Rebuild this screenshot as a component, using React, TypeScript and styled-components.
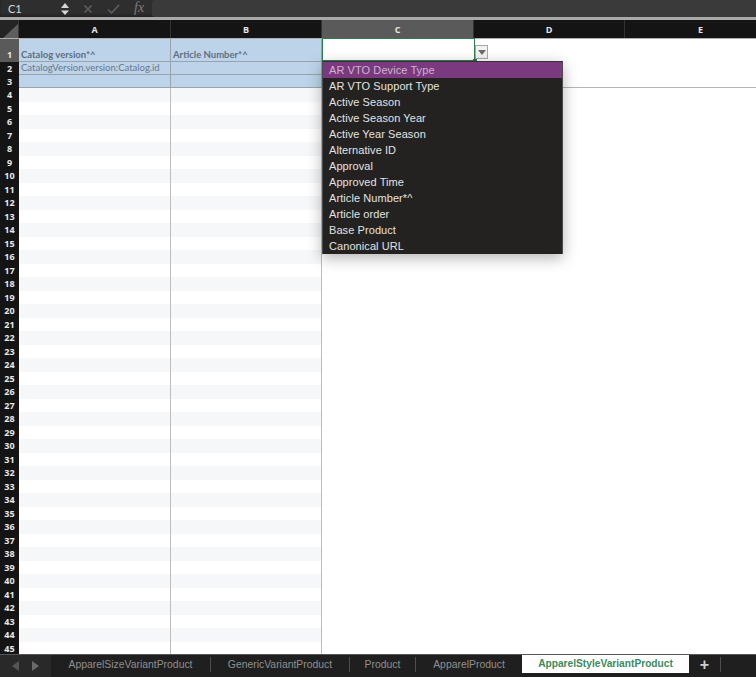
import React from "react";
import styled, { createGlobalStyle } from "styled-components";

const Global = createGlobalStyle`
  html, body { margin: 0; padding: 0; background: #fff; }
  body { font-family: "Liberation Sans", Arial, sans-serif; overflow: hidden; }
  #root { width: 756px; height: 677px; }
`;
const Page = styled.div`
  position: relative; width: 756px; height: 677px; display: flex; flex-direction: column; overflow: hidden;
`;
const FormulaBar = styled.div`
  height: 17px; flex: none; display: flex; align-items: center; background: #2e2e2e; color: #ddd;
  border-bottom: 3px solid #a9a9a9; box-shadow: inset 0 -2px 2px #222;
`;
const NameBox = styled.div`
  width: 60px; padding-left: 8px; box-sizing: border-box; font: 11px "Lato", sans-serif; color: #d8d8d8;
`;
const Stepper = styled.svg`width: 10px; height: 14px; flex: none;`;
const FormulaIcons = styled.div`
  width: 82px; flex: none; display: flex; align-items: center; padding-left: 13px; gap: 14px; box-sizing: border-box; height: 100%;
`;
const FxLabel = styled.span`
  font: italic 14px "Liberation Serif", serif; color: #7c7c7c; margin-top: -2px;
`;
const FormulaInput = styled.div`
  flex: 1; height: 100%; background: #3a3a3a; border-radius: 3px 0 0 3px;
`;
const ColumnHeader = styled.div`
  height: 18px; flex: none; display: grid; grid-template-columns: 19px 152px 151px 152px 151px 152px; background: #141414;
  border-bottom: 1px solid #b0b0b0;
`;
const Corner = styled.div`
  background: #242424; border-right: 1px solid #3a3a3a; display: flex; align-items: flex-end; justify-content: flex-end;
`;
const ColLabel = styled.div<{ $on?: boolean }>`
  display: flex; align-items: center; justify-content: center; font: 700 9px "Open Sans", sans-serif; color: #e4e4e4;
  background: ${(p) => (p.$on ? "#5a5a5a" : "transparent")}; border-right: 1px solid #333;
`;
const Sheet = styled.div`flex: 1; display: flex; flex-direction: column; min-height: 0;`;
const Row = styled.div<{ $h: number; $line?: boolean }>`
  height: ${(p) => p.$h}px; flex: none; box-sizing: border-box; display: grid;
  grid-template-columns: 19px 152px 151px 1fr;
  ${(p) => (p.$line ? "border-bottom: 1px solid #b5b5b5;" : "")}
`;
const RowLabel = styled.div<{ $on?: boolean }>`
  background: ${(p) => (p.$on ? "#5a5a5a" : "#141414")}; color: #e8e8e8; font: 700 9px "Open Sans", sans-serif;
  display: flex; align-items: ${(p) => (p.$on ? "flex-end" : "center")}; justify-content: center; line-height: 13px; box-sizing: border-box;
  padding-bottom: ${(p) => (p.$on ? 1 : 0)}px;
`;
const Cell = styled.div<{ $tone: "blue" | "stripe" | "plain"; $head?: boolean }>`
  box-sizing: border-box; border-right: 1px solid #bdbdbd; overflow: hidden; white-space: nowrap; padding-left: 2px;
  display: flex; align-items: flex-end;
  background: ${(p) => (p.$tone === "blue" ? "#bdd3e9" : p.$tone === "stripe" ? "#f5f7f9" : "#fff")};
  ${(p) => (p.$tone === "blue" ? "border-bottom: 1px solid #98a3ae; border-right-color: #98a3ae;" : "")}
  font: ${(p) => (p.$head ? 700 : 400)} 9.5px "Lato", sans-serif;
  color: ${(p) => (p.$head ? "#5d7083" : "#66798c")}; line-height: 12px;
`;
const Blank = styled.div``;
const SelectedCell = styled.div`
  position: absolute; left: 322px; top: 38px; width: 153px; height: 23px; box-sizing: border-box;
  border: 1px solid #2f7d4f; background: #fff;
`;
const Handle = styled.div`
  position: absolute; left: 473px; top: 59px; width: 4px; height: 4px; background: #217346;
`;
const ArrowButton = styled.div`
  position: absolute; left: 475px; top: 45px; width: 13px; height: 14px; box-sizing: border-box;
  background: #f2f2f2; border: 1px solid #a8a8a8; display: flex; align-items: center; justify-content: center;
  &::after { content: ""; border-left: 4px solid transparent; border-right: 4px solid transparent; border-top: 5px solid #6a6a6a; }
`;
const Menu = styled.div`
  position: absolute; left: 322px; top: 61px; width: 241px; height: 193px; box-sizing: border-box;
  background: #232221; box-shadow: 0 4px 14px rgba(0,0,0,.3); border: 1px solid #4c4c4c; border-bottom: 0; border-top-color: #333;
`;
const MenuItem = styled.div<{ $on?: boolean }>`
  height: 16px; padding-left: 6px; font: 11px/16px "Liberation Sans", sans-serif; letter-spacing: .08px;
  background: ${(p) => (p.$on ? "#7b3a80" : "transparent")}; color: ${(p) => (p.$on ? "#cdb4cf" : "#e2e2e2")};
`;
const TabBar = styled.div`
  height: 23px; flex: none; display: flex; background: #1f1f1f; border-top: 1px solid #565656; box-sizing: border-box;
`;
const TabNav = styled.div`
  width: 51px; flex: none; display: flex; gap: 13px; align-items: center; padding-left: 12px; box-sizing: border-box; background: #292929;
  height: 22px;
`;
const Tab = styled.div<{ $w: number; $active?: boolean; $plain?: boolean }>`
  width: ${(p) => p.$w}px; flex: none; box-sizing: border-box; height: ${(p) => (p.$active ? 18 : 15)}px;
  margin-top: ${(p) => (p.$active ? 0 : 2)}px; padding-bottom: ${(p) => (p.$active ? 2 : 0)}px;
  display: flex; align-items: center; justify-content: center;
  font: ${(p) => (p.$active ? "700 10.2px" : "400 10.4px")} "Liberation Sans", sans-serif;
  color: ${(p) => (p.$active ? "#3c8a5c" : "#8f8f8f")};
  background: ${(p) => (p.$active ? "#fff" : "transparent")};
  border-right: ${(p) => (p.$active || p.$plain ? "none" : "1px solid #4e4e4e")};
`;
const PlusTab = styled(Tab)`
  font-size: 16px; font-weight: 700; color: #cfcfcf;
`;

const items = ["AR VTO Device Type","AR VTO Support Type","Active Season","Active Season Year","Active Year Season","Alternative ID","Approval","Approved Time","Article Number*^","Article order","Base Product","Canonical URL"];
const columns = ["A","B","C","D","E"];
const rows = Array.from({ length: 45 }, (_, i) => i + 1);
const heightOf = (n: number) => (n === 1 ? 23 : n === 2 || n === 3 ? 13 : 13.5);

export default function App() {
  return (
    <Page>
      <Global />
      <FormulaBar>
        <NameBox>C1</NameBox>
        <Stepper viewBox="0 0 10 14"><path d="M5 1 9 6H1zM1 8.500h8L5 13z" fill="#d6d6d6" /></Stepper>
        <FormulaIcons>
          <svg width="10" height="10" viewBox="0 0 10 10"><path d="M1.500 1.500l7 7M8.500 1.500l-7 7" stroke="#5f5f5f" strokeWidth="1.500" /></svg>
          <svg width="13" height="10" viewBox="0 0 13 10"><path d="M1 5.500l3.500 3.500L12 1" stroke="#5f5f5f" strokeWidth="1.500" fill="none" /></svg>
          <FxLabel>fx</FxLabel>
        </FormulaIcons>
        <FormulaInput />
      </FormulaBar>
      <ColumnHeader>
        <Corner>
          <svg width="15" height="14" viewBox="0 0 15 14"><path d="M15 0v14H0z" fill="#5e5e5e" /></svg>
        </Corner>
        {columns.map((c) => (
          <ColLabel key={c} $on={c === "C"}>{c}</ColLabel>
        ))}
      </ColumnHeader>
      <Sheet>
        {rows.map((n) => {
          const blue = n <= 3;
          const tone = blue ? "blue" : n % 2 === 0 ? "stripe" : "plain";
          return (
            <Row key={n} $h={heightOf(n)} $line={n === 3}>
              <RowLabel $on={n === 1}>{n}</RowLabel>
              <Cell $tone={tone} $head={n === 1}>
                {n === 1 ? "Catalog version*^" : n === 2 ? "CatalogVersion.version:Catalog.id" : ""}
              </Cell>
              <Cell $tone={tone} $head={n === 1}>{n === 1 ? "Article Number*^" : ""}</Cell>
              <Blank />
            </Row>
          );
        })}
      </Sheet>
      <TabBar>
        <TabNav>
          <svg width="7" height="10" viewBox="0 0 7 10"><path d="M7 0v10L0 5z" fill="#555" /></svg>
          <svg width="7" height="10" viewBox="0 0 7 10"><path d="M0 0v10l7-5z" fill="#6a6a6a" /></svg>
        </TabNav>
        <Tab $w={160}>ApparelSizeVariantProduct</Tab>
        <Tab $w={139}>GenericVariantProduct</Tab>
        <Tab $w={66}>Product</Tab>
        <Tab $w={106} $plain>ApparelProduct</Tab>
        <Tab $w={167} $active>ApparelStyleVariantProduct</Tab>
        <PlusTab $w={32}>+</PlusTab>
      </TabBar>
      <SelectedCell />
      <ArrowButton />
      <Handle />
      <Menu>
        {items.map((t, i) => (
          <MenuItem key={t} $on={i === 0}>{t}</MenuItem>
        ))}
      </Menu>
    </Page>
  );
}
